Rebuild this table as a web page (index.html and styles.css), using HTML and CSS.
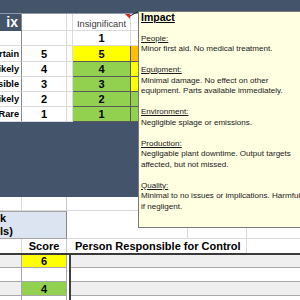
FILE: index.html
```html
<!DOCTYPE html>
<html>
<head>
<meta charset="utf-8">
<link rel="stylesheet" href="styles.css">
</head>
<body>
<div class="sheet">
  <div class="topband"></div>

  <div class="matrix">
    <div class="c lbl navyhdr">ix</div>
    <div class="c"></div>
    <div class="c"></div>
    <div class="c ins">Insignificant<span class="flag"></span></div>
    <div class="c"></div>
    <div class="c"></div>

    <div class="c lbl"></div>
    <div class="c"></div>
    <div class="c"></div>
    <div class="c num">1</div>
    <div class="c"></div>
    <div class="c"></div>

    <div class="c lbl">rtain</div>
    <div class="c num">5</div>
    <div class="c"></div>
    <div class="c num val yellow">5</div>
    <div class="c val orange"></div>
    <div class="c"></div>

    <div class="c lbl">ikely</div>
    <div class="c num">4</div>
    <div class="c"></div>
    <div class="c num val green">4</div>
    <div class="c val yellow"></div>
    <div class="c"></div>

    <div class="c lbl">ssible</div>
    <div class="c num">3</div>
    <div class="c"></div>
    <div class="c num val green">3</div>
    <div class="c val yellow"></div>
    <div class="c"></div>

    <div class="c lbl">ikely</div>
    <div class="c num">2</div>
    <div class="c"></div>
    <div class="c num val green">2</div>
    <div class="c val green"></div>
    <div class="c"></div>

    <div class="c lbl">Rare</div>
    <div class="c num">1</div>
    <div class="c"></div>
    <div class="c num val green">1</div>
    <div class="c val green"></div>
    <div class="c"></div>
  </div>

  <div class="navyblock"></div>

  <div class="lower">
    <div class="g ga"></div>
    <div class="g gb"></div>
    <div class="g gc"></div>
    <div class="g ge"></div>
    <div class="g gf"></div>
    <div class="g gg"></div>

    <div class="risk"><span>k</span><span>ls)</span></div>
    <div class="g gc r23"></div>
    <div class="g ge r23"></div>
    <div class="g gf r23"></div>
    <div class="g gg r23"></div>

    <div class="g ga hd"></div>
    <div class="g gb hd score">Score</div>
    <div class="g gc hd"></div>
    <div class="g hd person">Person Responsible for Control</div>
    <div class="g gg hd"></div>

    <div class="rule"></div>

    <div class="d da shade"></div>
    <div class="d db yellow">6</div>
    <div class="d dc"></div>
    <div class="d dd"></div>
    <div class="d de shade"></div>

    <div class="d da"></div>
    <div class="d db"></div>
    <div class="d dc"></div>
    <div class="d dd"></div>
    <div class="d de"></div>

    <div class="d da shade"></div>
    <div class="d db green">4</div>
    <div class="d dc"></div>
    <div class="d dd"></div>
    <div class="d de shade"></div>

    <div class="d da"></div>
    <div class="d db"></div>
    <div class="d dc"></div>
    <div class="d dd"></div>
    <div class="d de"></div>
  </div>

  <svg class="connector" width="12" height="8" viewBox="0 0 12 8"><line x1="1" y1="6" x2="10" y2="1" stroke="#222" stroke-width="1"/></svg>

  <div class="note">
    <div class="note-title">Impact</div>
    <p><span class="u">People:</span><br>Minor first aid. No medical treatment.</p>
    <p><span class="u">Equipment:</span><br>Minimal damage. No effect on other<br>equipment. Parts available immediately.</p>
    <p><span class="u">Environment:</span><br>Negligible splage or emissions.</p>
    <p><span class="u">Production:</span><br>Negligable plant downtime. Output targets<br>affected, but not missed.</p>
    <p><span class="u">Quality:</span><br>Minimal to no issues or implications. Harmful<br>if negligent.</p>
  </div>
</div>
</body>
</html>
```

FILE: styles.css
```css
html, body {
  margin: 0;
  padding: 0;
}

body {
  width: 300px;
  height: 300px;
  overflow: hidden;
  background: #ffffff;
  font-family: "Liberation Sans", Arial, sans-serif;
  color: #000;
}

.sheet {
  position: relative;
  width: 300px;
  height: 300px;
  overflow: hidden;
}

.topband {
  height: 13px;
  background: #44546a;
  border-bottom: 1px solid #8d99aa;
}

/* ---------- matrix ---------- */
.matrix {
  display: grid;
  grid-template-columns: 22px 45px 6px 58px 8px 1fr;
  grid-template-rows: 17px 15px 16px 15px 15px 15px 15px;
}

.c {
  box-sizing: border-box;
  border-right: 1px solid #dadada;
  border-bottom: 1px solid #dadada;
  display: flex;
  align-items: center;
  justify-content: center;
  overflow: hidden;
  white-space: nowrap;
  position: relative;
}

.lbl {
  justify-content: flex-end;
  padding-right: 2px;
  font-size: 9.2px;
  font-weight: bold;
  border-right: 1px solid #8a8a8a;
}

.navyhdr {
  background: #44546a;
  color: #ffffff;
  font-size: 14px;
  padding-right: 3px;
  border-bottom: 1px solid #44546a;
}

.ins {
  font-size: 9.3px;
  color: #3a3a3a;
  padding-top: 3px;
  overflow: visible;
}

.flag {
  position: absolute;
  top: 0;
  right: 0;
  width: 0;
  height: 0;
  border-top: 5px solid #e0202a;
  border-left: 5px solid transparent;
}

.num {
  font-size: 11px;
  font-weight: bold;
}

.val {
  border-right: 1px solid #5a5a5a;
  border-bottom: 1px solid #5a5a5a;
}

.yellow { background: #ffff00; }
.green { background: #92d050; }
.orange { background: #ffc000; }

.navyblock {
  height: 75px;
  background: #44546a;
}

/* ---------- lower table ---------- */
.lower {
  display: grid;
  grid-template-columns: 22px 45px 2px 2px 117px 59px 1fr;
  grid-template-rows: 14px 14px 14px 14px 2px 13px 14px 14px 14px;
}

.g {
  box-sizing: border-box;
  border-bottom: 1px solid #dadada;
  border-right: 1px solid #dadada;
  white-space: nowrap;
  overflow: hidden;
}

.ga { grid-column: 1; }
.gb { grid-column: 2; border-right-color: #c8c8c8; }
.gc { grid-column: 3 / 5; border-right: none; }
.ge { grid-column: 5; }
.gf { grid-column: 6; }
.gg { grid-column: 7; border-right: none; }

.r23 { grid-row: 2 / 4; }

.risk {
  grid-column: 1 / 3;
  grid-row: 2 / 4;
  box-sizing: border-box;
  background: #dbe4f0;
  border-top: 1px solid #a6a6a6;
  border-right: 1px solid #8a8a8a;
  border-bottom: 1px solid #a6a6a6;
  display: flex;
  flex-direction: column;
  justify-content: center;
  font-size: 11px;
  font-weight: bold;
  line-height: 13px;
}

.hd {
  font-size: 11px;
  font-weight: bold;
  display: flex;
  align-items: center;
  border-bottom: none;
}

.score {
  justify-content: center;
}

.person {
  grid-column: 5 / 7;
  padding-left: 4px;
}

.rule {
  grid-column: 1 / -1;
  background: #3a3a3a;
}

.d {
  box-sizing: border-box;
  border-bottom: 1px solid #a8a8a8;
  display: flex;
  align-items: center;
  justify-content: center;
  font-size: 11px;
  font-weight: bold;
}

.da { grid-column: 1; border-right: 1px solid #a8a8a8; }
.db { grid-column: 2; border-right: 1px solid #a8a8a8; }
.dc { grid-column: 3; border-bottom: none; }
.dd { grid-column: 4; background: #3a3f4a; border-bottom: none; }
.de { grid-column: 5 / -1; }

.shade { background: #efefef; }

/* ---------- comment ---------- */
.connector {
  position: absolute;
  left: 129px;
  top: 10px;
}

.note {
  position: absolute;
  left: 138px;
  top: 11px;
  width: 176px;
  height: 217px;
  box-sizing: border-box;
  background: #ffffe1;
  border: 1px solid #7a7a7a;
  padding: 0 0 0 2px;
  font-family: "Liberation Sans", Arial, sans-serif;
  font-size: 8.05px;
  line-height: 10.5px;
  color: #1a1a1a;
  white-space: nowrap;
}

.note-title {
  font-size: 10.5px;
  font-weight: bold;
  text-decoration: underline;
  line-height: 11px;
  color: #000;
}

.note p {
  margin: 10.5px 0 0 0;
}

.u {
  text-decoration: underline;
}
```
